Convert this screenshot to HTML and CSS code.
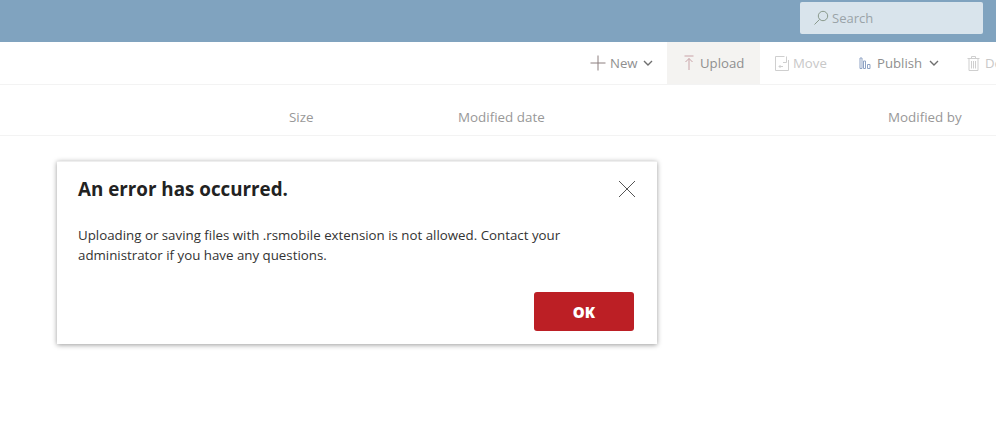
FILE: index.html
```html
<!DOCTYPE html>
<html lang="en">
<head>
  <meta charset="UTF-8">
  <title>Documents</title>
  <link rel="stylesheet" href="styles.css">
</head>
<body>
  <header class="topbar">
    <div class="search">
      <svg class="search-icon" width="18" height="18" viewBox="0 0 18 18" fill="none" stroke="#8a9a8c" stroke-width="1">
        <circle cx="11" cy="7" r="4.7"/>
        <path d="M7.6 10.4 L2.5 15.5"/>
      </svg>
      <span>Search</span>
    </div>
  </header>

  <nav class="toolbar">
    <div class="tool tool-new">
      <svg width="16" height="16" viewBox="0 0 16 16" stroke="#8c7f7f" stroke-width="1"><path d="M8 0.5V15.5M0.5 8H15.5"/></svg>
      <span>New</span>
      <svg class="chev" width="10" height="6" viewBox="0 0 10 6" fill="none" stroke="#6f6f6f" stroke-width="1.4"><path d="M1 1l4 4 4-4"/></svg>
    </div>
    <div class="tool tool-upload">
      <svg width="12" height="16" viewBox="0 0 12 16" fill="none" stroke="#c9a3a8" stroke-width="1"><path d="M1.500 1H10.500M6 15V3.500M2.500 7L6 3.500 9.500 7"/></svg>
      <span>Upload</span>
    </div>
    <div class="tool tool-move tool-disabled">
      <svg width="14" height="15" viewBox="0 0 14 15" fill="none" stroke="#cfcfcf" stroke-width="1"><path d="M9.500 0.500H0.500V14.500H13.500V4"/><path d="M11.500 0.500V6.500H8M8 10.500H4M5.500 9L4 10.500 5.500 12"/></svg>
      <span>Move</span>
    </div>
    <div class="tool tool-publish">
      <svg width="12" height="12" viewBox="0 0 12 12" fill="none" stroke="#8fa3c4" stroke-width="1"><path d="M1 1H3V11.500H1ZM4.500 4H6.500V11.500H4.500ZM8.500 7.500H11V11.500H8.500Z"/></svg>
      <span>Publish</span>
      <svg class="chev" width="10" height="6" viewBox="0 0 10 6" fill="none" stroke="#6f6f6f" stroke-width="1.4"><path d="M1 1l4 4 4-4"/></svg>
    </div>
    <div class="tool tool-disabled">
      <svg width="13" height="15" viewBox="0 0 13 15" fill="none" stroke="#cfcfcf" stroke-width="1"><path d="M0.500 2.500H12.500M4.500 2.500V0.500H8.500V2.500M2 2.500V14.500H11V2.500M4.500 5V12.500M6.500 5V12.500M8.500 5V12.500"/></svg>
      <span>Delete</span>
    </div>
  </nav>

  <div class="columns">
    <span class="col col-size">Size</span>
    <span class="col col-date">Modified date</span>
    <span class="col col-by">Modified by</span>
  </div>

  <div class="dialog">
    <div class="dialog-head">
      <h2>An error has occurred.</h2>
      <svg class="close" width="18" height="18" viewBox="0 0 18 18" stroke="#555" stroke-width="1"><path d="M1 1L17 17M17 1L1 17"/></svg>
    </div>
    <p>Uploading or saving files with .rsmobile extension is not allowed. Contact your administrator if you have any questions.</p>
    <div class="dialog-actions">
      <button>OK</button>
    </div>
  </div>
</body>
</html>
```

FILE: styles.css
```css
body {
  margin: 0;
  height: 444px;
  overflow: hidden;
  background-color: #fff;
  font-family: "Open Sans", "Noto Sans", sans-serif;
  position: relative;
}
.topbar {
  height: 42px;
  background-color: #80a3bf;
  display: flex;
  justify-content: flex-end;
  padding: 2px 13px 0 0;
  box-sizing: border-box;
}
.search {
  width: 183px;
  height: 32px;
  background-color: #d9e4ec;
  border-radius: 2px;
  display: flex;
  align-items: center;
  padding-left: 12px;
  box-sizing: border-box;
  font-size: 13px;
  color: #9aa3a8;
}
.search-icon {
  margin-right: 2px;
}
.toolbar {
  height: 43px;
  display: flex;
  padding-left: 578px;
  border-bottom: 1px solid #f3f3f3;
  box-sizing: border-box;
  overflow: hidden;
  font-size: 13.2px;
  color: #8f8f8f;
  white-space: nowrap;
}
.tool {
  display: flex;
  align-items: center;
  gap: 5px;
  padding-left: 12px;
  height: 42px;
  box-sizing: border-box;
  flex-shrink: 0;
}
.tool .chev {
  margin-left: 1px;
}
.tool-new {
  width: 89px;
  gap: 4px;
}
.tool-upload {
  width: 93px;
  padding-left: 16px;
  background-color: #f4f3f1;
}
.tool-move {
  width: 87px;
  padding-left: 15px;
  gap: 4px;
}
.tool-publish {
  width: 108px;
  gap: 6px;
}
.tool-disabled {
  color: #c8c8c8;
}
.columns {
  height: 51px;
  border-bottom: 1px solid #f3f3f3;
  box-sizing: border-box;
  display: flex;
  align-items: flex-end;
  padding: 0 0 9px 289px;
  font-size: 13.4px;
  color: #989898;
}
.col-size {
  width: 169px;
}
.col-date {
  width: 430px;
}
.dialog {
  position: absolute;
  left: 57px;
  top: 161px;
  width: 600px;
  height: 183px;
  background: #fff;
  box-sizing: border-box;
  padding: 13px 23px 0 21px;
  border-top: 1px solid #eee;
  box-shadow: 0 1px 5px rgba(0,0,0,0.4);
}
.dialog-head {
  display: flex;
  justify-content: space-between;
  align-items: center;
  height: 28px;
}
.dialog-head h2 {
  margin: 0;
  font-size: 18.8px;
  font-weight: 700;
  color: #222;
}
.close {
  margin-right: -2px;
}
.dialog p {
  margin: 22px 0 0;
  font-size: 13.3px;
  line-height: 20px;
  color: #333;
}
.dialog-actions {
  display: flex;
  justify-content: flex-end;
  margin-top: 27px;
}
.dialog-actions button {
  width: 100px;
  height: 39px;
  border: none;
  border-radius: 3px;
  background-color: #bc1f25;
  color: #fff;
  font-family: inherit;
  font-size: 15px;
  font-weight: 800;
}
```
